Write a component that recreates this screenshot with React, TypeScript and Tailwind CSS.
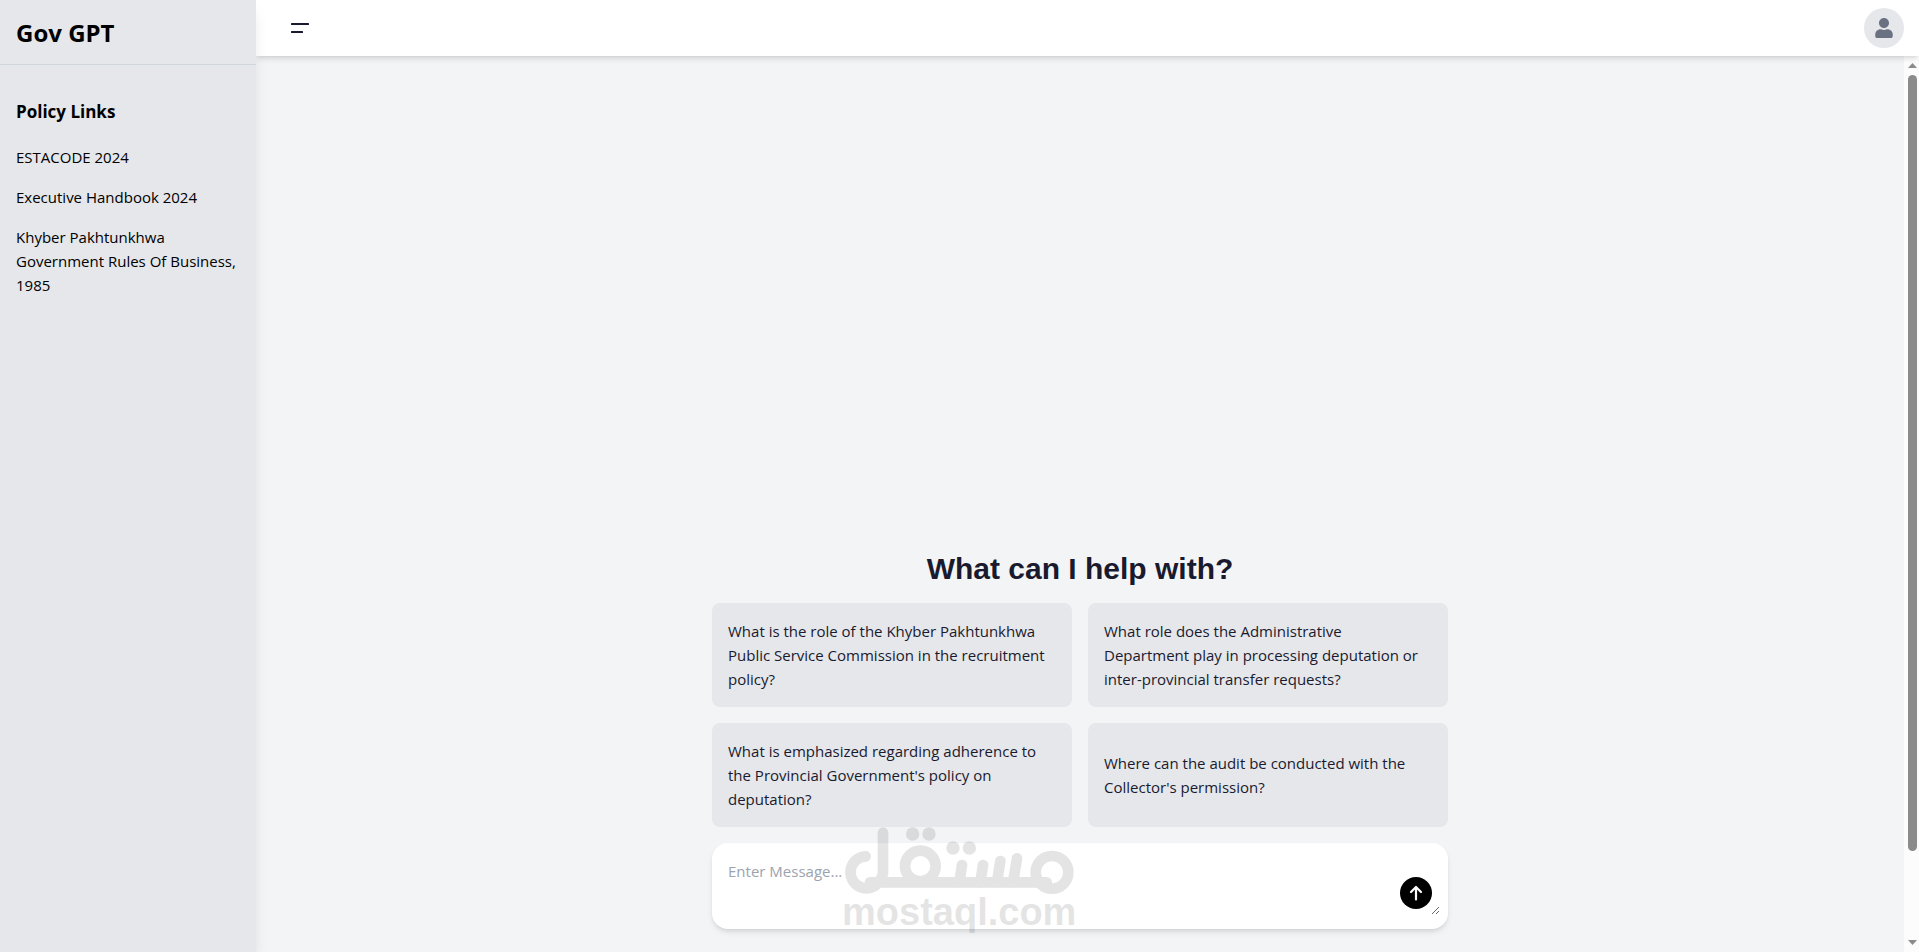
import { useState } from "react";
import { FaUser } from "react-icons/fa";

const policyLinks = [
  { label: "ESTACODE 2024", href: "#estacode" },
  { label: "Executive Handbook 2024", href: "#handbook" },
  {
    label: "Khyber Pakhtunkhwa Government Rules Of Business, 1985",
    href: "#rules-of-business",
  },
];

const suggestions = [
  "What is the role of the Khyber Pakhtunkhwa Public Service Commission in the recruitment policy?",
  "What role does the Administrative Department play in processing deputation or inter-provincial transfer requests?",
  "What is emphasized regarding adherence to the Provincial Government's policy on deputation?",
  "Where can the audit be conducted with the Collector's permission?",
];

function Sidebar() {
  return (
    <aside className="relative z-20 w-64 shrink-0 bg-gray-200 text-black shadow-lg">
      <div className="border-b border-gray-300 px-4 pt-[17px] pb-[15px]">
        <h1 className="text-2xl font-bold">Gov GPT</h1>
      </div>
      <nav className="px-4 pt-8">
        <h2 className="mb-[18px] text-[17px] leading-[30px] font-bold">
          Policy Links
        </h2>
        <ul className="space-y-4">
          {policyLinks.map((link) => (
            <li key={link.href}>
              <a href={link.href} className="block hover:underline">
                {link.label}
              </a>
            </li>
          ))}
        </ul>
      </nav>
    </aside>
  );
}

function Header({ onToggle }: { onToggle: () => void }) {
  return (
    <header className="relative z-10 flex h-14 shrink-0 items-center justify-between bg-white pr-[15px] pl-8 shadow-md">
      <button type="button" aria-label="Toggle sidebar" onClick={onToggle}>
        <svg className="size-6" viewBox="0 0 24 24" fill="currentColor">
          <rect x="3" y="7" width="18" height="2" rx="0.5" />
          <rect x="3" y="15" width="12" height="2" rx="0.5" />
        </svg>
      </button>
      <button
        type="button"
        aria-label="Account"
        className="flex size-10 items-center justify-center rounded-full bg-gray-200 text-gray-500"
      >
        <FaUser className="size-5" />
      </button>
    </header>
  );
}

// Mostaql mark, lies over the message box
function Watermark() {
  return (
    <div className="pointer-events-none absolute -top-[23px] left-[118px] w-[260px] opacity-10">
      <svg
        className="block w-full"
        viewBox="0 0 780 228"
        fill="none"
        stroke="black"
        strokeWidth="32"
        strokeLinecap="round"
      >
        <path d="M107 109A48 48 0 1 0 155 172L159 160V38" />
        <path d="M120 187H650" />
        <circle cx="271" cy="138" r="46" />
        <circle cx="666" cy="157" r="49" />
        <path d="M396 135L388 187M459 135L451 187M511 123L501 187M561 115L549 187" />
        <g fill="black" stroke="none">
          <circle cx="248" cy="42" r="20" />
          <circle cx="297" cy="42" r="20" />
          <circle cx="369" cy="84" r="20" />
          <circle cx="418" cy="84" r="20" />
        </g>
      </svg>
      <p className="-mt-1 pl-3 font-['Liberation_Sans',Arial,sans-serif] text-[38px] leading-10 font-bold text-black">
        mostaql.com
      </p>
    </div>
  );
}

function Scrollbar() {
  return (
    <div className="flex w-[15px] shrink-0 flex-col items-center bg-[#fcfcfc] py-[7px] pl-[2px] text-[#8b8b8b]">
      <svg className="h-[5px] w-[9px]" viewBox="0 0 9 5" fill="currentColor">
        <path d="M0 5L4.500 0L9 5Z" />
      </svg>
      <div className="flex w-full flex-1 flex-col items-center pt-[7px] pb-[3px]">
        <div className="h-[90%] w-[9px] rounded-full bg-[#8b8b8b]" />
      </div>
      <svg className="h-[5px] w-[9px]" viewBox="0 0 9 5" fill="currentColor">
        <path d="M0 0H9L4.500 5Z" />
      </svg>
    </div>
  );
}

function App() {
  const [isSidebarOpen, setIsSidebarOpen] = useState(true);
  const [message, setMessage] = useState("");

  return (
    <div className="flex h-screen bg-gray-100 font-['Segoe_UI','Open_Sans',sans-serif] text-[15px] leading-6 text-[#1a1a2e]">
      {isSidebarOpen && <Sidebar />}

      <div className="flex min-w-0 flex-1 flex-col">
        <Header onToggle={() => setIsSidebarOpen(!isSidebarOpen)} />

        <div className="flex min-h-0 flex-1">
          <main className="flex flex-1 flex-col justify-end overflow-hidden">
            <div className="mx-auto w-full max-w-3xl px-4 pb-[23px]">
              <h2 className="mb-4 text-center font-['Liberation_Sans',Arial,sans-serif] text-3xl font-bold">
                What can I help with?
              </h2>

              <div className="mb-4 grid grid-cols-2 gap-4">
                {suggestions.map((text) => (
                  <button
                    key={text}
                    type="button"
                    onClick={() => setMessage(text)}
                    className="rounded-lg bg-gray-200 py-4 pr-5 pl-4 text-left hover:bg-gray-300"
                  >
                    {text}
                  </button>
                ))}
              </div>

              <form
                className="relative rounded-2xl bg-white p-2 shadow-md"
                onSubmit={(e) => e.preventDefault()}
              >
                <textarea
                  aria-label="Message"
                  rows={2}
                  value={message}
                  onChange={(e) => setMessage(e.target.value)}
                  placeholder="Enter Message..."
                  className="mb-[6px] block w-full resize p-2 outline-none placeholder:text-[#9ca3af]"
                />
                <button
                  type="submit"
                  aria-label="Send"
                  className="absolute right-4 bottom-5 size-8 rounded-full bg-black text-white"
                >
                  <svg
                    className="size-8"
                    viewBox="0 0 32 32"
                    fill="none"
                    stroke="currentColor"
                    strokeWidth="2.2"
                    strokeLinecap="round"
                    strokeLinejoin="round"
                  >
                    <path d="M16 10.300V22.500M11 15L16 10L21 15" />
                  </svg>
                </button>
                <Watermark />
              </form>
            </div>
          </main>
          <Scrollbar />
        </div>
      </div>
    </div>
  );
}

export default App;
